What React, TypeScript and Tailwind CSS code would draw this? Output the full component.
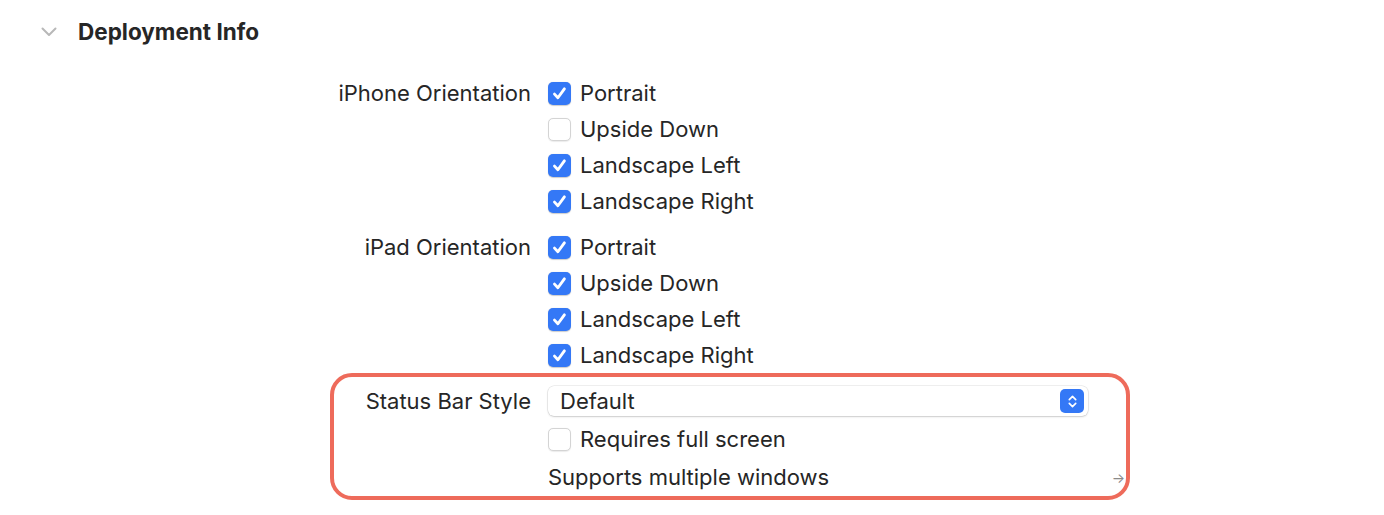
import React from 'react';

const Check = ({ checked }: { checked: boolean }) =>
  checked ? (
    <span className="flex h-[23px] w-[23px] shrink-0 items-center justify-center rounded-[5px] bg-[#3478f6] shadow-[0_0.5px_1px_rgba(0,0,0,0.2)]">
      <svg viewBox="0 0 16 16" className="h-[17px] w-[17px]" fill="none" stroke="white" strokeWidth="2.7" strokeLinecap="round" strokeLinejoin="round">
        <path d="M3.3 8.6 L6.5 12 L12.6 3.6" />
      </svg>
    </span>
  ) : (
    <span className="h-[23px] w-[23px] shrink-0 rounded-[5px] border border-[#d4d4d4] bg-white shadow-[0_0.5px_1px_rgba(0,0,0,0.08)]" />
  );

const CheckRow = ({ label, checked }: { label: string; checked: boolean }) => (
  <div className="flex h-9 items-center gap-[9px]">
    <Check checked={checked} />
    <span>{label}</span>
  </div>
);

const groups = [
  {
    title: 'iPhone Orientation',
    items: [
      { label: 'Portrait', checked: true },
      { label: 'Upside Down', checked: false },
      { label: 'Landscape Left', checked: true },
      { label: 'Landscape Right', checked: true },
    ],
  },
  {
    title: 'iPad Orientation',
    items: [
      { label: 'Portrait', checked: true },
      { label: 'Upside Down', checked: true },
      { label: 'Landscape Left', checked: true },
      { label: 'Landscape Right', checked: true },
    ],
  },
];

export default function App() {
  return (
    <div
      className="h-[515px] w-[1384px] overflow-hidden bg-white pt-[1px] text-[22px] text-[#262626]"
      style={{ fontFamily: 'Inter, "Noto Sans", sans-serif' }}
    >
      {/* Section header */}
      <div className="flex h-[62px] items-center pl-[41px]">
        <svg viewBox="0 0 16 10" className="h-[10px] w-[16px]" fill="none" stroke="#b8b8b8" strokeWidth="2" strokeLinecap="round" strokeLinejoin="round">
          <path d="M1.5 1.5 L8 8 L14.5 1.5" />
        </svg>
        <span className="ml-[21px] text-[22.5px] font-bold text-[#262626]">Deployment Info</span>
      </div>

      {/* Orientation groups */}
      <div className="mt-[12px] flex flex-col gap-[10px]">
        {groups.map((g) => (
          <div key={g.title} className="grid grid-cols-[531px_1fr] gap-x-[17px]">
            <div className="flex h-9 items-center justify-end">{g.title}</div>
            <div className="flex flex-col">
              {g.items.map((it) => (
                <CheckRow key={it.label} label={it.label} checked={it.checked} />
              ))}
            </div>
          </div>
        ))}
      </div>

      {/* Highlighted block */}
      <div className="ml-[330px] w-[800px] rounded-[22px] border-4 border-[#ee6b5b] pt-[9px]">
        <div className="grid grid-cols-[197px_1fr] gap-x-[17px]">
          <div className="flex h-[30px] items-center justify-end">Status Bar Style</div>
          <div className="flex h-[30px] w-[540px] items-center justify-between rounded-[6px] bg-white pl-[12px] pr-[4px] shadow-[0_0_0_0.5px_rgba(0,0,0,0.12),0_1px_2px_rgba(0,0,0,0.15)]">
            <span>Default</span>
            <span className="flex h-[24px] w-[24px] items-center justify-center rounded-[5px] bg-[#3478f6]">
              <svg viewBox="0 0 12 16" className="h-[15px] w-[11px]" fill="none" stroke="white" strokeWidth="1.8" strokeLinecap="round" strokeLinejoin="round">
                <path d="M2.5 6 L6 2.5 L9.5 6" />
                <path d="M2.5 10 L6 13.5 L9.5 10" />
              </svg>
            </span>
          </div>

          <div className="mt-[4px]" />
          <div className="mt-[4px] flex h-[38px] items-center gap-[9px]">
            <Check checked={false} />
            <span>Requires full screen</span>
          </div>

          <div />
          <div className="flex h-[38px] items-center justify-between pr-[1px]">
            <span>Supports multiple windows</span>
            <span className="text-[14px] text-[#8a8a8a]">→</span>
          </div>
        </div>
      </div>
    </div>
  );
}
